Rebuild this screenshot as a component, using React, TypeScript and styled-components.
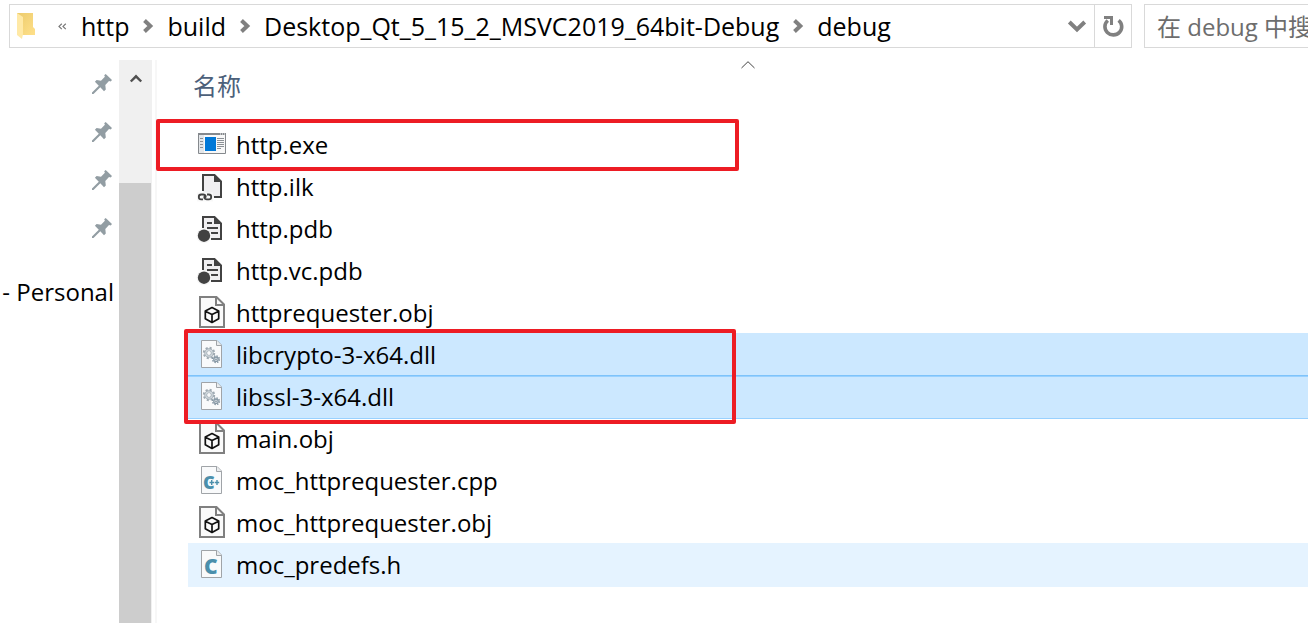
import React from "react";
import styled, { createGlobalStyle, css } from "styled-components";

const GlobalStyle = createGlobalStyle`
  * { box-sizing: border-box; }
  html, body, #root { height: 100%; }
  body {
    margin: 0;
    background: #fff;
    color: #000;
    font-family: "Open Sans", "Noto Sans CJK SC", sans-serif;
    font-size: 24px;
    line-height: 32px;
    overflow: hidden;
  }
  button, input { font: inherit; color: inherit; margin: 0; }
  svg { display: block; flex: none; overflow: visible; }
`;

const Explorer = styled.div`
  display: flex;
  flex-direction: column;
  height: 100%;
`;

const Toolbar = styled.header`
  display: flex;
  gap: 12px;
  padding: 4px 0 0 9px;
`;

const AddressBar = styled.nav`
  display: flex;
  flex: 1;
  min-width: 0;
  height: 44px;
  border: 1px solid #d9d9d9;
`;

const Crumbs = styled.div`
  display: flex;
  flex: 1;
  min-width: 0;
  align-items: center;
  gap: 14px;
  padding-left: 7px;
  font-size: 25px;
`;

const PlainButton = styled.button`
  display: flex;
  align-items: center;
  justify-content: center;
  padding: 0;
  border: 0;
  background: none;
  white-space: nowrap;
`;

const DropButton = styled(PlainButton)`
  width: 34px;
`;

const RefreshButton = styled(PlainButton)`
  width: 37px;
  border-left: 1px solid #d9d9d9;
`;

const Search = styled.input`
  width: 164px;
  height: 44px;
  padding: 0 0 0 12px;
  border: 1px solid #d9d9d9;
  border-right: 0;
  border-radius: 0;
  background: none;
  outline: 0;
  &::placeholder { color: #6d6d6d; opacity: 1; font-weight: 400; }
`;

const Body = styled.div`
  display: flex;
  flex: 1;
  min-height: 0;
  padding-top: 12px;
`;

const Sidebar = styled.aside`
  display: flex;
  flex-direction: column;
  align-items: flex-end;
  width: 119px;
`;

const PinSlot = styled.div`
  display: flex;
  align-items: center;
  height: 48px;
  padding-right: 7px;
`;

const SideLabel = styled.div`
  padding: 24px 5px 0 0;
  white-space: nowrap;
`;

const ScrollTrack = styled.div`
  display: flex;
  flex-direction: column;
  width: 33px;
  background: #f0f0f0;
`;

const ScrollUp = styled(PlainButton)`
  height: 37px;
`;

const ScrollThumb = styled.div`
  flex: 1;
  margin: 86px 1px 0 0;
  background: #cdcdcd;
`;

const Pane = styled.main`
  position: relative;
  flex: 1;
  min-width: 0;
  margin-left: 3px;
  padding-left: 31px;
  border-left: 2px solid #f7f7f7;
`;

const ColumnHeader = styled.div`
  display: flex;
  flex-direction: column;
  height: 63px;
  color: #4c607a;
`;

const SortMark = styled.div`
  display: flex;
  justify-content: center;
  height: 10px;
  padding-top: 1px;
`;

const ColumnName = styled(PlainButton)`
  align-self: flex-start;
  padding-left: 5px;
`;

const FileList = styled.ul`
  margin: 0;
  padding: 0;
  list-style: none;
`;

type RowState = "normal" | "selected" | "focused" | "hover";

const FileRow = styled.li<{ $state: RowState }>`
  display: flex;
  align-items: center;
  gap: 8px;
  height: 44px;
  margin-bottom: -2px;
  padding-left: 8px;
  white-space: nowrap;
  ${({ $state }) => $state === "selected" && css`background: #cce8ff;`}
  ${({ $state }) => $state === "focused" && css`
    background: #cce8ff;
    box-shadow: inset 0 1px #7ec3fa, inset 0 2px #99d1ff, inset 0 -1px #99d1ff;
  `}
  ${({ $state }) => $state === "hover" && css`background: #e5f3ff;`}
`;

const Highlight = styled.div<{ $left: number; $top: number; $width: number; $height: number }>`
  position: absolute;
  left: ${(p) => p.$left}px;
  top: ${(p) => p.$top}px;
  width: ${(p) => p.$width}px;
  height: ${(p) => p.$height}px;
  border: 4px solid #ed1c24;
  border-radius: 2px;
  pointer-events: none;
`;

const Folder = () => (
  <svg width="27" height="28" viewBox="0 0 27 28" aria-hidden="true">
    <defs>
      <linearGradient id="back" x1="0" y1="0" x2="1" y2="1">
        <stop offset="0" stopColor="#eccb6c" />
        <stop offset="1" stopColor="#ffe08a" />
      </linearGradient>
    </defs>
    <path d="M0 1H16V15L18 17V23H0z" fill="url(#back)" />
    <path d="M0 1L6 5V22L5 27L0 23z" fill="#ffe9a6" />
  </svg>
);

const Chevron = () => (
  <svg width="10" height="14" viewBox="0 0 10 14" aria-hidden="true">
    <path d="M1.5 1.5L7.3 7L1.5 12.5" fill="none" stroke="#808080" strokeWidth="4" />
  </svg>
);

const Overflow = () => (
  <svg width="9" height="7" viewBox="0 0 9 7" aria-hidden="true">
    <path d="M3.8 .7L1 3.4L3.8 6.1M7.8 .7L5 3.4L7.8 6.1" fill="none" stroke="#777" strokeWidth="1.2" />
  </svg>
);

const Down = () => (
  <svg width="18" height="12" viewBox="0 0 18 12" aria-hidden="true">
    <path d="M1.3 2L9 9.500L16.7 2" fill="none" stroke="#808080" strokeWidth="4" />
  </svg>
);

const Refresh = () => (
  <svg width="20" height="22" viewBox="0 0 20 22" aria-hidden="true">
    <path d="M4.8 5.500A8.4 8.2 0 1 0 15.6 5.300" fill="none" stroke="#808080" strokeWidth="3.6" />
    <path d="M1 2.500H8.500V10" fill="none" stroke="#808080" strokeWidth="3" />
  </svg>
);

const Pin = () => (
  <svg width="20" height="20" viewBox="0 0 20 20" aria-hidden="true">
    <path
      d="M13.7 0L20 6L18.7 7.5L17 7L13.3 11L13.8 15.4L12 17.2L8.3 13.2L1.5 20H0V18.5L6.8 11.8L2.9 7.8L4.6 6L9 6.7L12.9 2.8L12.2 1.3z"
      fill="#929da3"
    />
  </svg>
);

const FileSvg = ({ children }: { children: React.ReactNode }) => (
  <svg width="32" height="32" viewBox="0 0 32 32" aria-hidden="true">{children}</svg>
);

const ExeIcon = () => (
  <FileSvg>
    <path d="M2.5 4.5h27v20h-27z" fill="#f8f8f8" stroke="#85898d" />
    <path d="M2 4h28v2H2z" fill="#85898d" />
    <path d="M24 4.500h1v1h-1zM26 4.500h1v1h-1zM28 4.500h1v1h-1z" fill="#fff" />
    <path d="M3 6h5v18H3z" fill="#e3e6e9" />
    <path d="M4 9.5h3M4 12.500h3M4 15.500h3M4 18.500h3M21 9.500h7M21 11.500h7M21 13.500h7M21 15.500h7M21 17.500h7M21 19.500h4" stroke="#8b9095" />
    <path d="M9 8h11v14H9z" fill="#0078d7" />
  </FileSvg>
);

const PageShape = () => (
  <>
    <path d="M7 4h11.500l6.500 6.500v16H7z" fill="#f0eff1" />
    <path d="M18 3L26 11H18z" fill="#424242" />
  </>
);

const IlkIcon = () => (
  <FileSvg>
    <PageShape />
    <path d="M7 20V4H18.500L25 10.500V26H18" fill="none" stroke="#424242" strokeWidth="2" />
    <path d="M1 21.500h16v9H1z" fill="#f8f8f8" />
    <path
      d="M7 28.300H5.200A2.400 2.400 0 0 1 5.200 23.500H7.200C9.800 23.500 10.200 25.500 9.300 26.800M11 23.500H12.800A2.400 2.400 0 0 1 12.800 28.300H10.800C8.200 28.300 7.800 26.300 8.700 25"
      fill="none"
      stroke="#424242"
      strokeWidth="1.800"
    />
  </FileSvg>
);

const PdbIcon = () => (
  <FileSvg>
    <PageShape />
    <path d="M7 15V4H18.500L25 10.500V26H15" fill="none" stroke="#424242" strokeWidth="2" />
    <path d="M11 10h5M11 15h11M15 20h7" stroke="#424242" strokeWidth="2" />
    <circle cx="8" cy="22.700" r="7.500" fill="#f6f6f6" />
    <circle cx="8" cy="22.700" r="6.200" fill="#424242" />
  </FileSvg>
);

const ObjIcon = () => (
  <FileSvg>
    <path d="M4 0H20.500L28 7.500V30H4z" fill="#fafafa" stroke="#808080" strokeWidth="2" />
    <path d="M20 0V8H28" fill="none" stroke="#808080" strokeWidth="2" />
    <path
      d="M16 10.500L22.700 14V21.800L16 25.500L9.300 21.800V14zM9.300 14.200L16 17.500L22.700 14.200M16 17.500V25.500"
      fill="none"
      stroke="#111"
      strokeWidth="1.700"
      strokeLinejoin="round"
    />
  </FileSvg>
);

const ThinPage = () => (
  <>
    <path d="M5.500 1.500H21L25.500 6V28.500H5.500z" fill="#f9fafb" stroke="#a0a4a8" />
    <path d="M20.500 1.500V6.500H25.500" fill="#e9ecee" stroke="#a0a4a8" />
  </>
);

const DllIcon = () => (
  <FileSvg>
    <ThinPage />
    <circle cx="13" cy="14" r="5.200" fill="none" stroke="#9faab2" strokeWidth="2" strokeDasharray="2.100 1.984" />
    <circle cx="13" cy="14" r="3.300" fill="none" stroke="#9faab2" strokeWidth="2.800" />
    <circle cx="13" cy="14" r="3.200" fill="none" stroke="#d5dce1" strokeWidth="1.200" />
    <circle cx="20" cy="20.200" r="3.400" fill="none" stroke="#8798a5" strokeWidth="1.400" strokeDasharray="1.500 1.170" />
    <circle cx="20" cy="20.200" r="2.200" fill="#dfe5ea" stroke="#8798a5" strokeWidth="1.300" />
    <circle cx="20" cy="20.200" r=".8" fill="#6f818f" />
  </FileSvg>
);

const CppIcon = () => (
  <FileSvg>
    <ThinPage />
    <text x="7" y="24" fontSize="18" fontWeight="800" fill="#4b8fab">C</text>
    <path d="M13.500 17.500h5M16 15v5M18.500 17.500h5M21 15v5" stroke="#f9fafb" strokeWidth="3" />
    <path d="M13.500 17.500h4.500M15.700 15v5M18.700 17.500h4.500M21 15v5" stroke="#4b8fab" strokeWidth="1.400" />
  </FileSvg>
);

const HeaderIcon = () => (
  <FileSvg>
    <ThinPage />
    <text x="8" y="25" fontSize="21" fontWeight="800" fill="#4b8fab">C</text>
  </FileSvg>
);

const files: { name: string; Icon: React.FC; state?: RowState }[] = [
  { name: "http.exe", Icon: ExeIcon },
  { name: "http.ilk", Icon: IlkIcon },
  { name: "http.pdb", Icon: PdbIcon },
  { name: "http.vc.pdb", Icon: PdbIcon },
  { name: "httprequester.obj", Icon: ObjIcon },
  { name: "libcrypto-3-x64.dll", Icon: DllIcon, state: "selected" },
  { name: "libssl-3-x64.dll", Icon: DllIcon, state: "focused" },
  { name: "main.obj", Icon: ObjIcon },
  { name: "moc_httprequester.cpp", Icon: CppIcon },
  { name: "moc_httprequester.obj", Icon: ObjIcon },
  { name: "moc_predefs.h", Icon: HeaderIcon, state: "hover" },
];

const path = ["http", "build", "Desktop_Qt_5_15_2_MSVC2019_64bit-Debug", "debug"];

export default function App() {
  return (
    <>
      <GlobalStyle />
      <Explorer>
        <Toolbar>
          <AddressBar aria-label="Address">
            <Crumbs>
              <Folder />
              <PlainButton aria-label="Parent folders"><Overflow /></PlainButton>
              {path.map((part, i) => (
                <React.Fragment key={part}>
                  {i > 0 && <Chevron />}
                  <PlainButton>{part}</PlainButton>
                </React.Fragment>
              ))}
            </Crumbs>
            <DropButton aria-label="Recent locations"><Down /></DropButton>
            <RefreshButton aria-label="Refresh"><Refresh /></RefreshButton>
          </AddressBar>
          <Search type="text" aria-label="Search" placeholder="在 debug 中搜索" />
        </Toolbar>
        <Body>
          <Sidebar>
            {[0, 1, 2, 3].map((n) => (
              <PinSlot key={n}><Pin /></PinSlot>
            ))}
            <SideLabel>- Personal</SideLabel>
          </Sidebar>
          <ScrollTrack>
            <ScrollUp aria-label="Scroll up">
              <svg width="12" height="9" viewBox="0 0 12 9" aria-hidden="true">
                <path d="M.8 7.500L6 2.300L11.200 7.500" fill="none" stroke="#505050" strokeWidth="2.400" />
              </svg>
            </ScrollUp>
            <ScrollThumb />
          </ScrollTrack>
          <Pane>
            <ColumnHeader>
              <SortMark>
                <svg width="14" height="8" viewBox="0 0 14 8" aria-hidden="true">
                  <path d="M.5 7L7 .700L13.500 7" fill="none" stroke="#444" strokeWidth="1" />
                </svg>
              </SortMark>
              <ColumnName>名称</ColumnName>
            </ColumnHeader>
            <FileList>
              {files.map(({ name, Icon, state = "normal" }) => (
                <FileRow key={name} $state={state}>
                  <Icon />
                  <span>{name}</span>
                </FileRow>
              ))}
            </FileList>
            <Highlight $left={-1} $top={59} $width={583} $height={52} />
            <Highlight $left={27} $top={269} $width={552} $height={95} />
          </Pane>
        </Body>
      </Explorer>
    </>
  );
}
